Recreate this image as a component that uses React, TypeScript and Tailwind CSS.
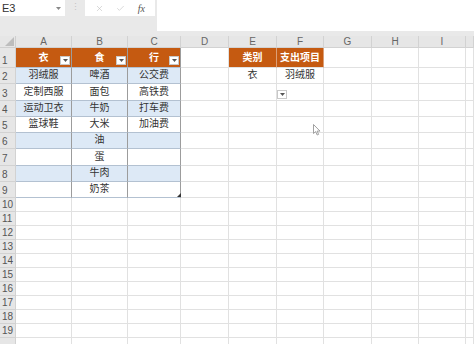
import { X, Check } from "lucide-react";

const cols = [
    { key: "", w: "w-[16px]" },
    { key: "A", w: "w-[56px]" },
    { key: "B", w: "w-[56px]" },
    { key: "C", w: "w-[53px]" },
    { key: "D", w: "w-[48px]" },
    { key: "E", w: "w-[48px]" },
    { key: "F", w: "w-[47px]" },
    { key: "G", w: "w-[48px]" },
    { key: "H", w: "w-[47px]" },
    { key: "I", w: "w-[47px]" },
    { key: "J", w: "flex-1" },
];

const table: Record<string, string[]> = {
    A: ["衣", "羽绒服", "定制西服", "运动卫衣", "篮球鞋", "", "", "", ""],
    B: ["食", "啤酒", "面包", "牛奶", "大米", "油", "蛋", "牛肉", "奶茶"],
    C: ["行", "公交费", "高铁费", "打车费", "加油费", "", "", "", ""],
};

const side: Record<string, string[]> = {
    E: ["类别", "衣"],
    F: ["支出项目", "羽绒服"],
};

const rows = Array.from({ length: 20 }, (_, i) => i + 1);

const Tri = ({ color = "#555" }: { color?: string }) => (
    <svg width="5" height="3" viewBox="0 0 5 3">
        <path d="M0 0 H5 L2.5 3 Z" fill={color} />
    </svg>
);

const DropBtn = () => (
    <div className="w-[10px] h-[9px] bg-white border border-[#c8c8c8] flex items-center justify-center">
        <Tri />
    </div>
);

const rowHeight = (r: number) =>
    r === 1 ? "h-[20px]" : r <= 9 ? "h-[16.25px]" : "h-[14px]";

const App = () => {
    const renderCell = (r: number, col: string, w: string) => {
        const inTable = table[col] && r <= 9;
        const inSide = side[col] && r <= 2;

        if (inTable) {
            const text = table[col][r - 1];
            const bg = r === 1 ? "bg-[#c55a11]" : r % 2 === 0 ? "bg-[#dde9f6]" : "bg-white";
            return (
                <div
                    key={col}
                    className={`${w} shrink-0 relative flex justify-center border-r border-b border-r-[#9c9c9c] border-b-[#b3c1d1] ${bg} ${r === 1 ? "items-center text-white font-bold" : "items-end pb-[1px] text-[#333]"}`}
                >
                    {text}
                    {r === 1 && (
                        <div className="absolute right-[1px] bottom-[2px]">
                            <DropBtn />
                        </div>
                    )}
                    {r === 9 && col === "C" && (
                        <svg className="absolute right-[-1px] bottom-[0px]" width="4" height="4" viewBox="0 0 4 4">
                            <path d="M4 0 V4 H0 Z" fill="#333" />
                        </svg>
                    )}
                </div>
            );
        }

        if (inSide) {
            const text = side[col][r - 1];
            return (
                <div
                    key={col}
                    className={`${w} shrink-0 flex justify-center border-b ${r === 1 ? "bg-[#c55a11] text-white font-bold items-center border-r border-r-[#dc9f77] border-b-[#e1e1e1]" : "items-end pb-[1px] text-[#333] border-r border-[#e1e1e1]"}`}
                >
                    {text}
                </div>
            );
        }

        return (
            <div key={col} className={`${w} shrink-0 relative border-r border-b border-[#e1e1e1]`}>
                {r === 3 && col === "F" && (
                    <div className="absolute left-0 bottom-[1px]">
                        <DropBtn />
                    </div>
                )}
            </div>
        );
    };

    return (
        <div className="w-[474px] h-[344px] overflow-hidden bg-white relative font-['Liberation_Sans','Noto_Sans_CJK_SC',sans-serif] text-[10px]">
            {/* formula bar */}
            <div className="h-[36px] bg-[#e9e9e9] flex items-start">
                <div className="w-[65px] h-[16px] bg-white flex items-center justify-between pl-[2px] pr-[4px] text-[11px] text-[#333]">
                    <span>E3</span>
                    <Tri color="#888" />
                </div>
                <div className="w-[20px] h-[16px] flex items-center justify-center text-[#c4c4c4] text-[9px]">⋮</div>
                <div className="w-[70px] h-[16px] bg-white flex items-center justify-around px-[4px]">
                    <X size={9} strokeWidth={1.5} color="#bdbdbd" />
                    <Check size={9} strokeWidth={1.5} color="#bdbdbd" />
                    <span className="font-['Liberation_Serif',serif] italic text-[10px] text-[#555]">fx</span>
                </div>
                <div className="ml-[2px] flex-1 h-[31px] bg-white" />
            </div>

            {/* column headers */}
            <div className="flex h-[12px] bg-[#e6e6e6]">
                {cols.map((c, i) =>
                    i === 0 ? (
                        <div key="corner" className={`${c.w} shrink-0 relative border-r border-b border-[#cfcfcf]`}>
                            <svg className="absolute left-[5px] top-[1px]" width="9" height="9" viewBox="0 0 9 9">
                                <path d="M9 0 V9 H0 Z" fill="#bdbdbd" />
                            </svg>
                        </div>
                    ) : (
                        <div
                            key={c.key}
                            className={`${c.w} shrink-0 flex items-center justify-center border-r border-b border-[#d2d2d2] text-[#666] leading-none`}
                        >
                            {c.key !== "J" && c.key}
                        </div>
                    )
                )}
            </div>

            {/* rows */}
            {rows.map((r) => (
                <div key={r} className={`flex ${rowHeight(r)}`}>
                    <div className="w-[16px] shrink-0 flex items-end pl-[2px] bg-[#e6e6e6] border-r border-b border-[#d2d2d2] text-[#555] leading-[13px]">
                        {r < 20 && r}
                    </div>
                    {cols.slice(1).map((c) => renderCell(r, c.key, c.w))}
                </div>
            ))}

            {/* mouse pointer */}
            <svg className="absolute left-[313px] top-[124px]" width="8" height="12" viewBox="0 0 8 12">
                <path d="M0.5 0.5 V9.5 L2.7 7.6 L4.2 11 L5.6 10.4 L4.1 7.1 H7 Z" fill="white" stroke="#8a8a8a" strokeWidth="0.8" />
            </svg>
        </div>
    );
};

export default App;
